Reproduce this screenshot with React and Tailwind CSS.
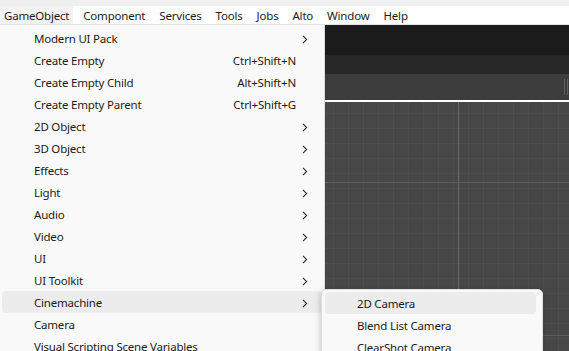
import React from 'react';

const menuBar = ['GameObject', 'Component', 'Services', 'Tools', 'Jobs', 'Alto', 'Window', 'Help'];

const items = [
  { label: 'Modern UI Pack', sub: true },
  { label: 'Create Empty', key: 'Ctrl+Shift+N' },
  { label: 'Create Empty Child', key: 'Alt+Shift+N' },
  { label: 'Create Empty Parent', key: 'Ctrl+Shift+G' },
  { label: '2D Object', sub: true },
  { label: '3D Object', sub: true },
  { label: 'Effects', sub: true },
  { label: 'Light', sub: true },
  { label: 'Audio', sub: true },
  { label: 'Video', sub: true },
  { label: 'UI', sub: true },
  { label: 'UI Toolkit', sub: true },
  { label: 'Cinemachine', sub: true, active: true },
  { label: 'Camera' },
  { label: 'Visual Scripting Scene Variables' },
];

const subItems = ['2D Camera', 'Blend List Camera', 'ClearShot Camera'];

const Chevron = () => (
  <svg width="6" height="9" viewBox="0 0 6 9" fill="none">
    <path d="M1 0.8 L4.6 4.5 L1 8.2" stroke="#2b2b2b" strokeWidth="1.1" />
  </svg>
);

const App = () => {
  return (
    <div
      className="relative w-[569px] h-[351px] overflow-hidden bg-[#f0f0f0] text-[11.5px] tracking-[-0.2px] text-[#1b1b1b] flex flex-col"
      style={{ fontFamily: '"Segoe UI", "Noto Sans", sans-serif' }}
    >
      <div className="h-[6px] shrink-0" />

      {/* menu bar */}
      <div className="h-[19px] shrink-0 bg-white flex items-stretch border-b border-[#e3e3e3]">
        {menuBar.map((m, i) => (
          <div
            key={m}
            className={`flex items-center pt-[2px] px-[4px] mr-[6px] leading-none ${i === 0 ? 'bg-[#f3f3f3]' : ''}`}
          >
            {m}
          </div>
        ))}
      </div>

      <div className="flex flex-1 min-h-0">
        {/* dropdown */}
        <div className="w-[325px] shrink-0 bg-[#f9f9f9] border-r border-[#dcdcdc] pt-[2px] px-[2px]">
          {items.map((it) => (
            <div
              key={it.label}
              className={`h-[22px] flex items-center pt-[2px] pl-[32px] pr-[14px] rounded-[4px] ${it.active ? 'bg-[#ececec]' : ''}`}
            >
              <span className="flex-1 whitespace-nowrap">{it.label}</span>
              {it.key && <span className="mr-[12px]">{it.key}</span>}
              {it.sub && <Chevron />}
            </div>
          ))}
        </div>

        {/* scene panel */}
        <div className="flex-1 flex flex-col bg-[#474747]">
          <div className="h-[30px] bg-[#1b1b1b]" />
          <div className="h-[19px] bg-[#282828]" />
          <div className="h-[26px] bg-[#3c3c3c] flex items-center justify-end pr-[1px] gap-[2px]">
            <div className="w-px h-[16px] bg-[#5e5e5e]" />
            <div className="w-px h-[16px] bg-[#5e5e5e]" />
          </div>
          <div className="h-[2px] bg-white" />
          <div className="flex-1 relative bg-[#474747] bg-[linear-gradient(to_right,rgba(255,255,255,0.035)_1px,transparent_1px),linear-gradient(to_bottom,rgba(255,255,255,0.035)_1px,transparent_1px)] bg-[size:15px_15px] bg-[position:-7px_-4px]">
            <div className="absolute left-[133px] top-0 bottom-0 w-px bg-[#6a6a6a]" />
            <div className="absolute left-0 right-0 top-[80px] h-px bg-[#5c5c5c]" />
            <div className="absolute left-0 right-0 top-[233px] h-px bg-[#5c5c5c]" />
          </div>
        </div>
      </div>

      {/* cinemachine submenu */}
      <div className="absolute left-[321px] top-[289px] w-[222px] h-[80px] bg-[#f9f9f9] border border-[#dedede] rounded-[5px] shadow-[0_2px_6px_rgba(0,0,0,0.25)] pt-[2px] pl-[3px] pr-[6px]">
        {subItems.map((s, i) => (
          <div
            key={s}
            className={`h-[22px] flex items-center pt-[2px] pl-[32px] rounded-[4px] ${i === 0 ? 'bg-[#ececec]' : ''}`}
          >
            {s}
          </div>
        ))}
      </div>
    </div>
  );
};

export default App;
